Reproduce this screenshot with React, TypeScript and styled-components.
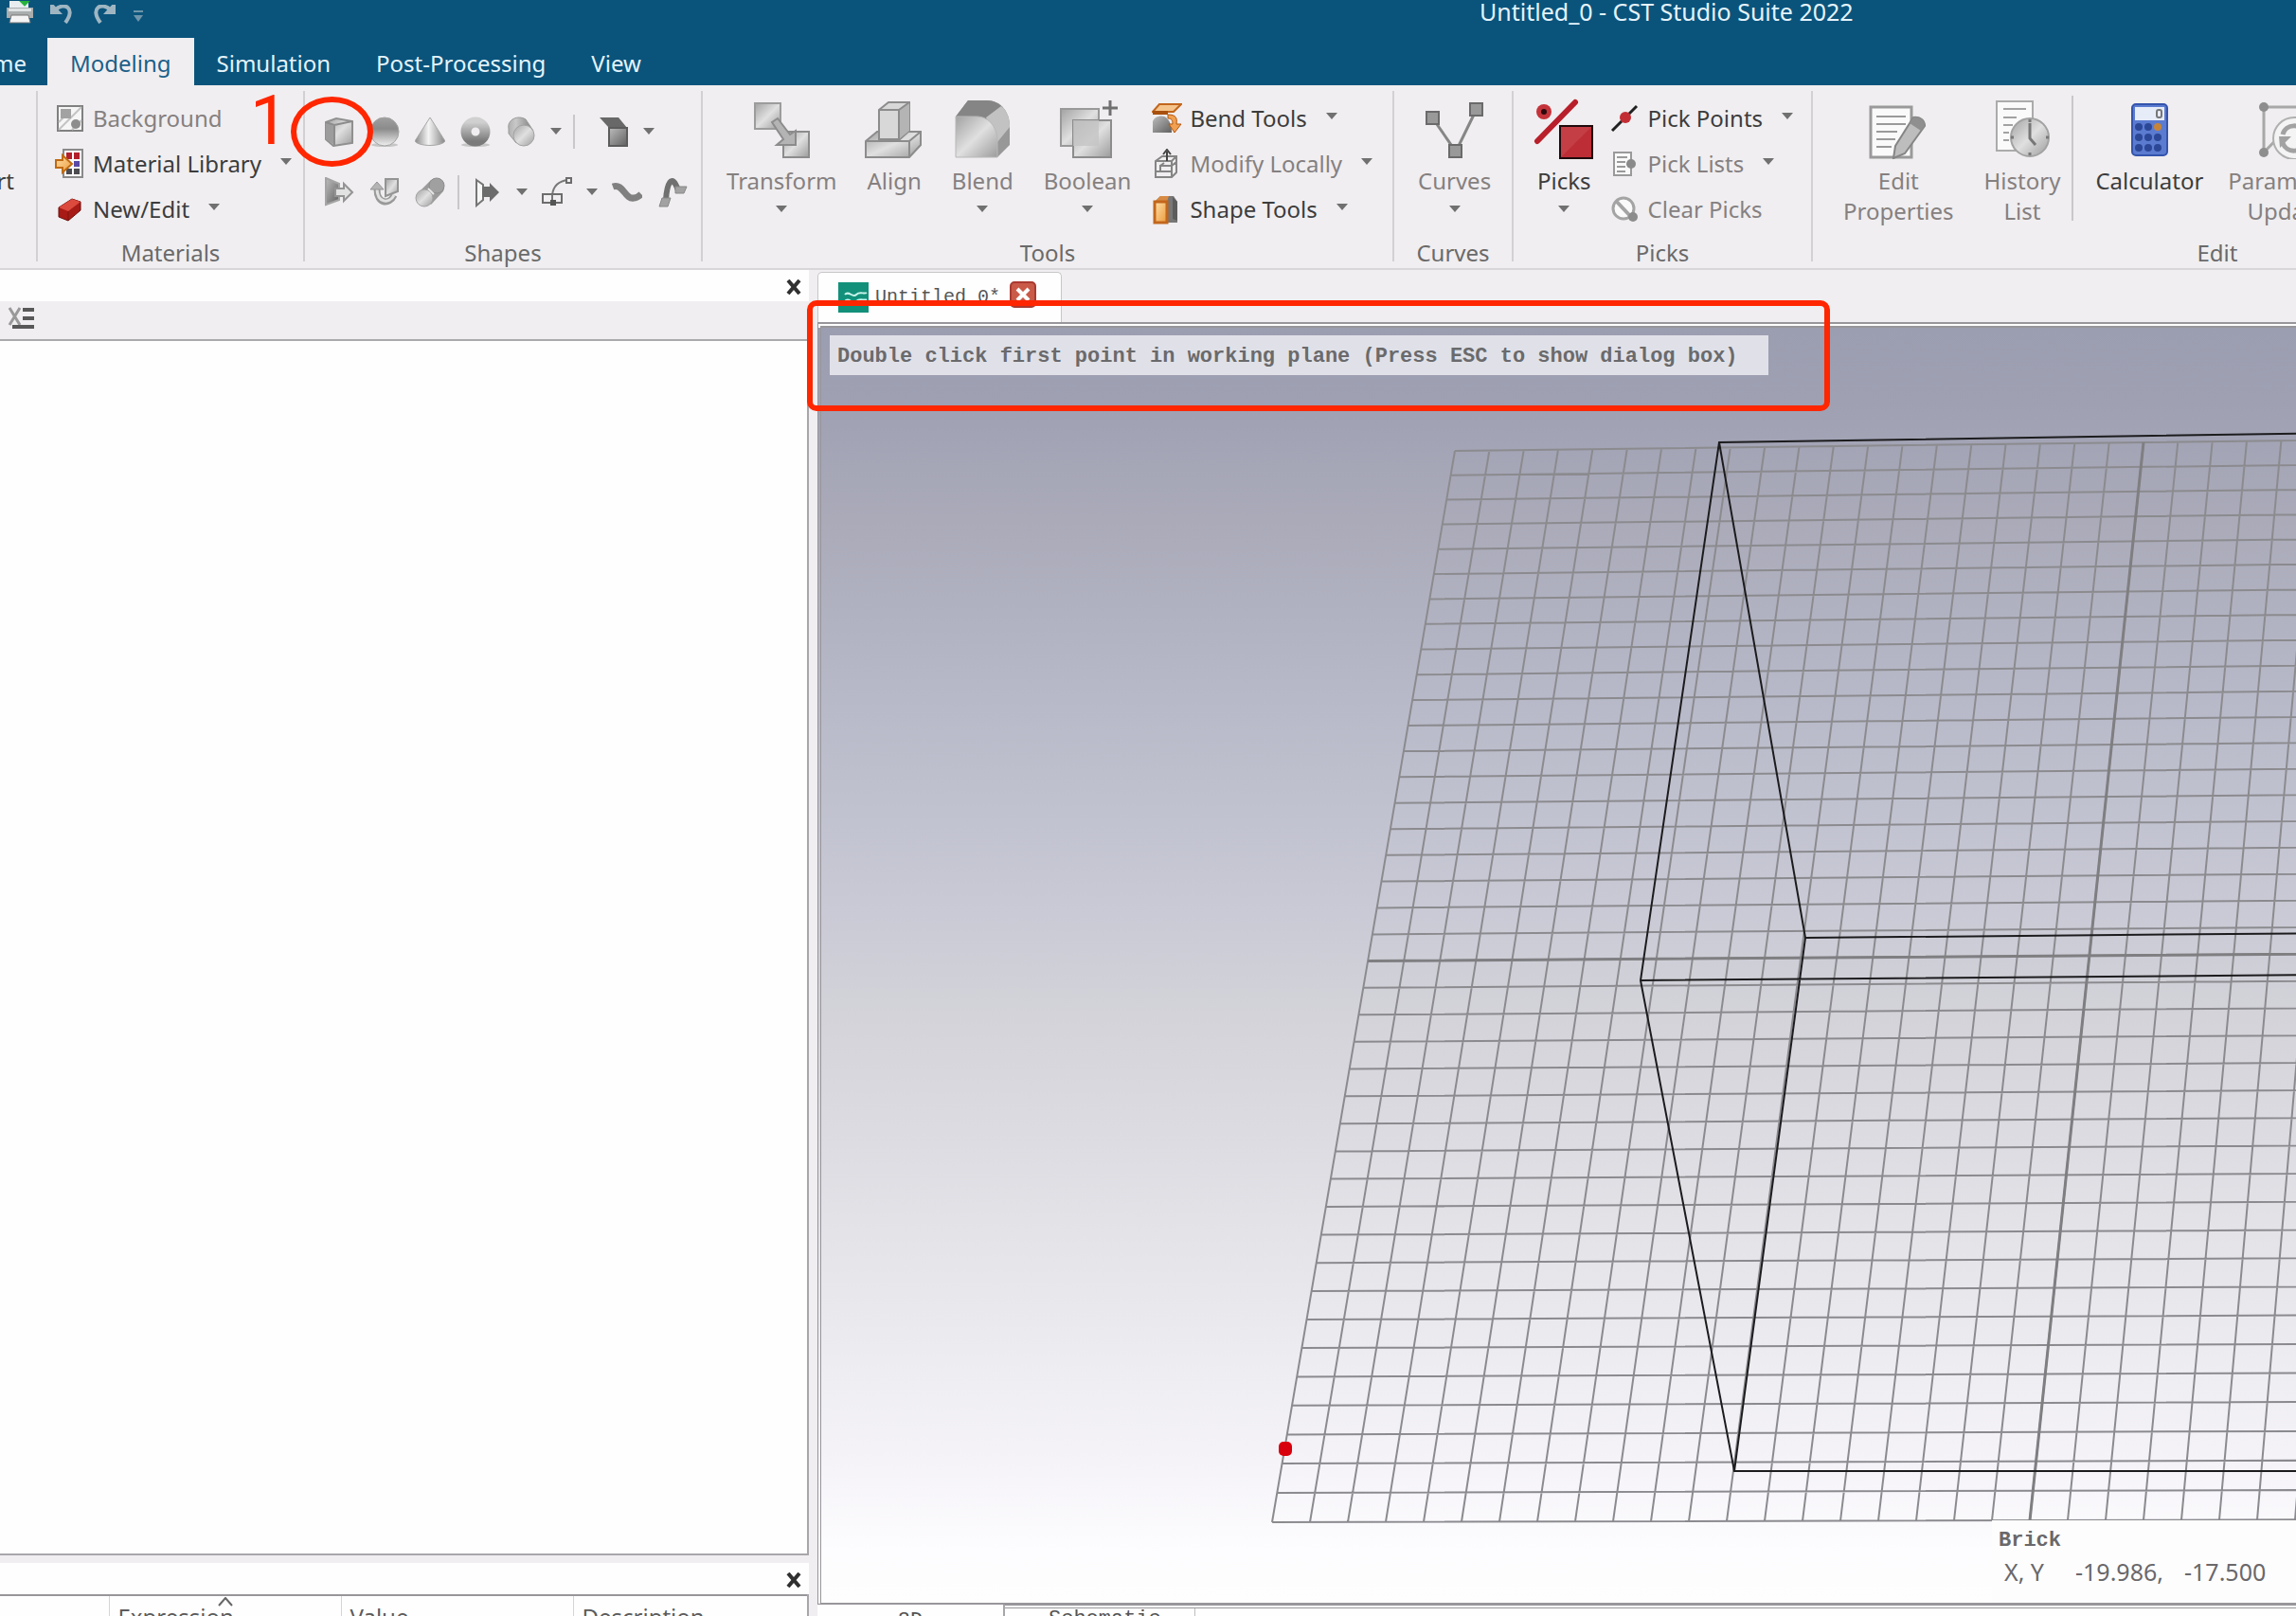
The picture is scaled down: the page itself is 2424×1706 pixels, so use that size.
import React from "react";
import styled, { createGlobalStyle } from "styled-components";

const UI = `"Noto Sans", "Open Sans", sans-serif`;
const MONO = `"Liberation Mono", "DejaVu Sans Mono", monospace`;
const RED = "#ff2600";

const Global = createGlobalStyle`
  * { box-sizing: border-box; }
  body { margin: 0; overflow: hidden; background: #f0eef0; }
  button { font: inherit; color: inherit; background: none; border: 0; padding: 0; margin: 0; cursor: pointer; }
`;

const Shell = styled.div`
  position: relative;
  display: flex;
  flex-direction: column;
  height: 100vh;
  overflow: hidden;
  font: 24px/32px ${UI};
  color: #3c3c3c;
`;

/* ---------- title bar and ribbon tabs ---------- */

const TopBar = styled.header`
  background: #0a547c;
  color: #e4f3fb;
  flex: none;
`;
const TitleRow = styled.div`
  display: grid;
  grid-template-columns: 64.44% 1fr;
  height: 40px;
`;
const QuickAccess = styled.div`
  display: flex;
  gap: 16px;
  padding-left: 6px;
  height: 24px;
`;
const Title = styled.h1`
  margin: 0;
  font: 25px/24px ${UI};
  white-space: nowrap;
`;
const Tabs = styled.nav`
  display: flex;
  height: 50px;
`;
const EdgeTab = styled.button`
  width: 50px;
  padding: 4px 22px 0 0;
  display: flex;
  justify-content: flex-end;
  align-items: center;
  overflow: hidden;
`;
const Tab = styled.button<{ $active?: boolean }>`
  padding: 4px 24px 0;
  background: ${(p) => (p.$active ? "#f0eef0" : "transparent")};
  color: ${(p) => (p.$active ? "#1c5f88" : "inherit")};
`;

/* ---------- ribbon ---------- */

const Ribbon = styled.div`
  display: flex;
  flex: none;
  height: 195px;
  padding-top: 6px;
  border-bottom: 2px solid #d8d6d8;
  overflow: hidden;
`;
const Group = styled.section<{ $w: number; $pad?: number }>`
  flex: none;
  display: flex;
  flex-direction: column;
  justify-content: space-between;
  width: ${(p) => p.$w}px;
  height: 180px;
  padding: 5px 0 0 ${(p) => p.$pad ?? 0}px;
  border-right: 2px solid #d2d0d2;
`;
const GroupBody = styled.div<{ $gap?: number }>`
  display: flex;
  gap: ${(p) => p.$gap ?? 0}px;
  height: 144px;
`;
const GroupLabel = styled.h2<{ $pad?: number }>`
  margin: 0 0 -7px ${(p) => -(p.$pad ?? 0)}px;
  font: inherit;
  color: #6a6a6a;
  text-align: center;
`;
const Big = styled.button<{ $off?: boolean }>`
  display: flex;
  flex-direction: column;
  align-items: center;
  flex: none;
  padding-top: 3px;
  color: ${(p) => (p.$off ? "#858080" : "#3c3c3c")};
  white-space: pre-line;
  text-align: center;
  svg { flex: none; margin: 0 -4px; }
`;
const BigLabel = styled.span`
  margin-top: 7px;
`;
const CaretSlot = styled.span`
  height: 28px;
  display: flex;
  align-items: center;
`;
const Stack = styled.div<{ $ml?: number; $mt?: number }>`
  display: flex;
  flex-direction: column;
  margin: ${(p) => p.$mt ?? 0}px 0 0 ${(p) => p.$ml ?? 0}px;
`;
const Small = styled.button<{ $off?: boolean }>`
  display: flex;
  align-items: center;
  gap: 8px;
  height: 48px;
  white-space: nowrap;
  color: ${(p) => (p.$off ? "#858080" : "#3c3c3c")};
  svg { flex: none; }
`;
const SmallCaret = styled.span`
  display: flex;
  margin: 0 0 4px 12px;
`;
const IconRow = styled.div`
  display: flex;
  align-items: center;
  height: 64px;
`;
const IconButton = styled.button<{ $ml?: number }>`
  width: 48px;
  height: 48px;
  margin-left: ${(p) => p.$ml ?? 0}px;
  display: grid;
  place-items: center;
`;
const CaretButton = styled.button`
  width: 26px;
  height: 48px;
  display: grid;
  place-items: center;
`;
const Rule = styled.span<{ $h: number; $m: number }>`
  flex: none;
  width: 2px;
  height: ${(p) => p.$h}px;
  margin: 0 ${(p) => p.$m}px;
  background: #c9c7c9;
`;
const EdgeLabel = styled.button`
  width: 37px;
  padding: 74px 22px 0 0;
  display: flex;
  justify-content: flex-end;
  align-items: flex-start;
  overflow: hidden;
`;

/* ---------- work area ---------- */

const Work = styled.main`
  flex: 1;
  min-height: 0;
  display: grid;
  grid-template-columns: 854px minmax(0, 1fr);
  gap: 9px;
`;
const Side = styled.aside`
  display: flex;
  flex-direction: column;
  min-height: 0;
`;
const PaneTitle = styled.div`
  flex: none;
  display: flex;
  justify-content: flex-end;
  align-items: center;
  height: 33px;
  padding-right: 8px;
  background: #fefefe;
`;
const TreeTools = styled.div`
  flex: none;
  height: 42px;
  padding: 5px 0 0 7px;
  border-bottom: 2px solid #aaaaac;
`;
const Tree = styled.div`
  flex: 1;
  background: #fefefe;
  border-right: 2px solid #a8a6aa;
  border-bottom: 2px solid #a8a6aa;
`;
const Params = styled.section`
  flex: none;
  height: 56px;
  margin-top: 8px;
  overflow: hidden;
`;
const ParamTable = styled.table`
  width: 100%;
  table-layout: fixed;
  border-collapse: collapse;
  background: #fefefe;
  border-top: 2px solid #98969a;
  border-right: 2px solid #a8a6aa;
`;
const Th = styled.th<{ $w?: number }>`
  position: relative;
  width: ${(p) => (p.$w ? p.$w + "px" : "auto")};
  height: 44px;
  padding: 0 9px;
  border-right: 1px solid #d6d4d6;
  font-weight: 400;
  text-align: left;
  color: #5c5c5c;
`;
const SortMark = styled.span`
  position: absolute;
  top: 1px;
  left: 50%;
  margin-left: -8px;
  display: flex;
`;

const Documents = styled.section`
  display: flex;
  flex-direction: column;
  min-height: 0;
  padding-top: 2px;
`;
const DocTab = styled.div`
  flex: none;
  align-self: flex-start;
  display: flex;
  align-items: center;
  height: 53px;
  padding: 2px 26px 2px 21px;
  background: #fefefe;
  border: 1px solid #c8c6c8;
  border-bottom: 0;
  border-radius: 5px 5px 0 0;
`;
const DocName = styled.span`
  margin: 0 10px 0 7px;
  font: 20px/32px ${MONO};
  color: #555;
`;
const View = styled.div`
  position: relative;
  flex: 1;
  min-height: 0;
  border: double #98969a;
  border-width: 6px 0 2px 4px;
  background: linear-gradient(#9b9db0 0%, #9fa1b3 6%, #aaaab9 15%, #b8bac9 30%, #cacad6 46%, #d3d3d9 54%, #dcdce2 64%, #e9e9ed 77%, #f5f3f8 89%, #fdfcfe 96%, #fefefe 100%);
  svg { display: block; }
`;
const Hint = styled.p`
  position: absolute;
  left: 9px;
  top: 8px;
  margin: 0;
  padding: 4px 32px 0 8px;
  background: #e0e1e8;
  color: #6a6a6c;
  font: 700 22px/38px ${MONO};
  white-space: nowrap;
`;
const Readout = styled.div`
  position: absolute;
  right: 0;
  bottom: 0;
  width: 321px;
  height: 87px;
  padding: 6px 0 0 7px;
  background: #fdfdfe;
  color: #6a686a;
`;
const ReadoutName = styled.div`
  font: 700 22px/32px ${MONO};
`;
const Coords = styled.div`
  display: flex;
  padding-left: 6px;
  font-size: 25px;
  white-space: nowrap;
`;
const Coord = styled.span<{ $w: number }>`
  width: ${(p) => p.$w}px;
`;
const SheetTabs = styled.div`
  flex: none;
  display: flex;
  height: 12px;
  overflow: hidden;
  background: #fefefe;
  font: 22px/24px ${MONO};
  color: #555;
`;
const ActiveSheet = styled.button`
  flex: none;
  width: 198px;
  height: 32px;
  padding-top: 4px;
  border-right: 2px solid #a8a6aa;
`;
const OtherSheets = styled.div`
  flex: 1;
  height: 32px;
  display: flex;
  border-top: 4px double #98969a;
`;
const Sheet = styled.button`
  height: 24px;
  width: 201px;
  padding-left: 46px;
  text-align: left;
  border-right: 1px solid #c0bec0;
`;

/* ---------- annotations ---------- */

const MarkNumber = styled.span`
  position: absolute;
  left: 264px;
  top: 92px;
  font: 400 72px/72px Roboto, sans-serif;
  color: ${RED};
`;
const MarkCircle = styled.span`
  position: absolute;
  left: 307px;
  top: 102px;
  width: 87px;
  height: 74px;
  border: 6px solid ${RED};
  border-radius: 50%;
  pointer-events: none;
`;
const MarkBox = styled.span`
  position: absolute;
  left: 852px;
  top: 317px;
  width: 1080px;
  height: 117px;
  border: 6px solid ${RED};
  border-radius: 10px;
  pointer-events: none;
`;
const Defs = styled.svg`
  position: absolute;
`;

/* ---------- icons ---------- */

const Svg = ({ w = 32, h = 32, children }: { w?: number; h?: number; children: React.ReactNode }) => (
  <svg width={w} height={h} viewBox={`0 0 ${w} ${h}`} fill="none" aria-hidden="true">{children}</svg>
);

const Caret = () => (
  <Svg w={12} h={8}><path d="M0 0h12L6 7z" fill="#707070" /></Svg>
);
const Cross = () => (
  <Svg w={16} h={16}><path d="M2 1l12 14M14 1L2 15" stroke="#303030" strokeWidth="4" /></Svg>
);

const Gradients = () => (
  <Defs width="0" height="0" aria-hidden="true">
    <defs>
      <linearGradient id="g" x1="0" y1="0" x2="1" y2="1"><stop offset="0" stopColor="#a2a2a2" /><stop offset=".5" stopColor="#e0e0e0" /><stop offset="1" stopColor="#9c9c9c" /></linearGradient>
      <linearGradient id="gh"><stop offset="0" stopColor="#888" /><stop offset=".45" stopColor="#f4f4f4" /><stop offset="1" stopColor="#858585" /></linearGradient>
      <linearGradient id="gv" x1="0" y1="0" x2="0" y2="1"><stop offset="0" stopColor="#a0a0a0" /><stop offset=".4" stopColor="#8b8b8b" /><stop offset="1" stopColor="#f0f0f0" /></linearGradient>
      <linearGradient id="gd" x1="0" y1="0" x2="1" y2="1"><stop offset="0" stopColor="#bdbdbd" /><stop offset="1" stopColor="#606060" /></linearGradient>
      <linearGradient id="gt" x1="0" y1="0" x2="0" y2="1"><stop offset="0" stopColor="#d0d0d0" /><stop offset="1" stopColor="#7a7a7a" /></linearGradient>
      <linearGradient id="gc"><stop offset="0" stopColor="#b0b0b0" /><stop offset=".3" stopColor="#c8c8c8" /><stop offset="1" stopColor="#7c7c7c" /></linearGradient>
      <linearGradient id="or" x1="0" y1="0" x2="1" y2="1"><stop offset="0" stopColor="#ffe0a8" /><stop offset="1" stopColor="#ec9a3c" /></linearGradient>
    </defs>
  </Defs>
);

const Printer = () => (
  <Svg w={30} h={24}>
    <path d="M4 0h20v8H4z" fill="#e8eef0" />
    <path d="M1 7h28v11H1z" fill="#a9adad" /><path d="M3 8h24v3H3z" fill="#dfe3e3" />
    <path d="M6 15h18l2 8H4z" fill="#f4f4f4" stroke="#777" />
    <path d="M15-2l5 5 8-8" stroke="#27b33c" strokeWidth="4" />
  </Svg>
);
const Undo = () => (
  <Svg w={28} h={20}><path d="M7 5C15-3 29 3 17 19" stroke="#9fb6c2" strokeWidth="4" /><path d="M1-4v14h13z" fill="#9fb6c2" /></Svg>
);
const Redo = () => (
  <Svg w={28} h={20}><path d="M20 5C12-3-2 3 10 19" stroke="#9fb6c2" strokeWidth="4" /><path d="M26-4v14H13z" fill="#9fb6c2" /></Svg>
);
const More = () => (
  <Svg w={12} h={18}><path d="M1 5h10" stroke="#6f95aa" strokeWidth="2" /><path d="M1 9h10l-5 7z" fill="#6f95aa" /></Svg>
);

const BackgroundIcon = () => (
  <Svg>
    <rect x="3" y="3" width="26" height="26" fill="#f6f6f6" stroke="#808080" strokeWidth="2" />
    <path d="M4 28L28 4M4 20l8-8M18 28l10-10" stroke="#c4c4c4" strokeWidth="2" />
    <rect x="6" y="6" width="11" height="10" fill="#a2a2a2" /><circle cx="22" cy="22" r="5" fill="#8d8d8d" />
  </Svg>
);
const LibraryIcon = () => (
  <Svg>
    <path d="M9 1h20v29H9z" fill="#fafafa" stroke="#8a8a8a" strokeWidth="2" />
    <path d="M12 4h6v7h-6zM20 4h6v7h-6z" fill="#b3202c" /><path d="M20 13h6v6h-6z" fill="#5a4aa8" /><path d="M12 21h6v6h-6zM20 21h6v6h-6z" fill="#4c4c50" />
    <path d="M1 12h7V7l10 9-10 9v-5H1z" fill="url(#or)" stroke="#c06a12" strokeWidth="2" />
  </Svg>
);
const BrickIcon = () => (
  <Svg>
    <path d="M4 14L18 5l9 3v9L14 28 4 24z" fill="#a81a16" stroke="#6d0f0c" />
    <path d="M4 14L18 5l9 3-13 10z" fill="#dc4a3e" /><path d="M14 18v10" stroke="#7c120e" />
  </Svg>
);

const BoxIcon = () => (
  <Svg>
    <path d="M2 6l11-4 17 3v23l-20 3-8-7z" fill="url(#g)" stroke="#909090" strokeWidth="2" />
    <path d="M2 6l9 4v20l-9-6z" fill="#9c9c9c" /><path d="M2 6l9 3 19-4M11 9v21" stroke="#8c8c8c" strokeWidth="2" />
  </Svg>
);
const SphereIcon = () => (
  <Svg><ellipse cx="16" cy="30" rx="14" ry="2" fill="#c6c6c6" /><circle cx="16" cy="16" r="15" fill="url(#gv)" stroke="#a4a4a4" /></Svg>
);
const ConeIcon = () => (
  <Svg><path d="M16 1L0 26c4 6 28 6 32 0z" fill="url(#gh)" stroke="#a8a8a8" /></Svg>
);
const TorusIcon = () => (
  <Svg><ellipse cx="16" cy="30" rx="15" ry="2" fill="#c6c6c6" /><circle cx="16" cy="16" r="10" stroke="url(#gt)" strokeWidth="11" /></Svg>
);
const CylinderIcon = () => (
  <Svg>
    <path d="M3 13C1 3 13-2 21 3l8 12-18 13-8-10z" fill="url(#gc)" stroke="#9a9a9a" />
    <circle cx="19" cy="20" r="11" fill="url(#g)" stroke="#a2a2a2" />
  </Svg>
);
const FaceIcon = () => (
  <Svg>
    <path d="M1 1h20l9 11H11z" fill="#686868" /><path d="M11 12h19v19H11z" fill="url(#gd)" stroke="#5c5c5c" strokeWidth="2" />
  </Svg>
);
const ExtrudeIcon = ({ dark }: { dark?: boolean }) => dark ? (
  <Svg>
    <path d="M5 3l7 5v16l-7 6z" fill="#f6f6f6" stroke="#757575" strokeWidth="2" />
    <path d="M11 10h8V6l10 10-10 10v-5h-8z" fill="#6c6c6c" />
  </Svg>
) : (
  <Svg>
    <path d="M2 1l14 6v17L2 29z" fill="url(#gd)" stroke="#a4a4a4" strokeWidth="2" />
    <path d="M12 12h9V7l9 9-9 9v-5h-9z" fill="#e2e2e2" stroke="#949494" strokeWidth="2" />
  </Svg>
);
const RotateIcon = () => (
  <Svg>
    <path d="M17 2h13v13l-13 5z" fill="url(#g)" stroke="#949494" strokeWidth="2" />
    <path d="M8 13c0 15 13 17 18 6" stroke="#999" strokeWidth="7" /><path d="M8 12c0 15 13 17 18 7" stroke="#e2e2e2" strokeWidth="3" />
    <path d="M1 13l7-8 7 8z" fill="#b4b4b4" stroke="#959595" />
  </Svg>
);
const LoftIcon = () => (
  <Svg>
    <path d="M4 16L16 4c8-6 18 3 14 11L17 29z" fill="#9b9b9b" />
    <circle cx="23" cy="9" r="8" fill="#a0a0a0" stroke="#8c8c8c" /><circle cx="10" cy="22" r="9" fill="url(#g)" stroke="#a2a2a2" />
    <path d="M14 12l6 6" stroke="#e6e6e6" strokeWidth="2" />
  </Svg>
);
const SweepIcon = () => (
  <Svg>
    <path d="M11 19C12 9 18 4 28 3" stroke="#777" strokeWidth="2" />
    <path d="M1 18h20v9H1zM26 1h5v5h-5z" fill="#f0eef0" stroke="#6c6c6c" strokeWidth="2" /><path d="M11 18v8" stroke="#777" strokeWidth="2" /><rect x="9" y="24" width="6" height="6" fill="#555" />
  </Svg>
);
const WaveIcon = () => (
  <Svg><path d="M1 10C12 6 14 24 23 22c4 0 6-2 8-4" stroke="#808080" strokeWidth="7" /></Svg>
);
const PipeIcon = () => (
  <Svg>
    <path d="M9 24C10 8 15-6 22 14" stroke="#707070" strokeWidth="6" />
    <path d="M5 22h9l-3 9H2zM19 10h12l-3 7h-9z" fill="#a2a2a2" stroke="#888" />
  </Svg>
);

const TransformIcon = () => (
  <Svg w={64} h={64}>
    <rect x="4" y="5" width="27" height="27" fill="url(#g)" stroke="#9c9c9c" strokeWidth="2" /><rect x="34" y="35" width="27" height="27" fill="url(#g)" stroke="#8c8c8c" strokeWidth="2" />
    <path d="M22 25l6-4 13 17 6-4v15H27l7-6z" fill="#b4b4b4" stroke="#8c8c8c" strokeWidth="2" />
  </Svg>
);
const AlignIcon = () => (
  <Svg w={64} h={64}>
    <path d="M2 45l12-10h46v14L48 62H2z" fill="url(#g)" stroke="#8c8c8c" strokeWidth="2" /><path d="M2 45h46l12-10M48 45v17" stroke="#8c8c8c" strokeWidth="2" />
    <path d="M16 12l10-8h22v30l-10 9H16z" fill="#d8d8d8" stroke="#8c8c8c" strokeWidth="2" /><path d="M37 12l11-8v30l-11 9z" fill="#b4b4b4" /><path d="M16 12h21l11-8M37 12v31" stroke="#8c8c8c" strokeWidth="2" />
  </Svg>
);
const BlendIcon = () => (
  <Svg w={64} h={64}>
    <path d="M4 19L17 2h20c16 0 24 14 24 27v20L48 62H4z" fill="#989898" />
    <path d="M4 19L17 2h20c7 0 13 3 17 8L36 23z" fill="#858585" /><path d="M36 20l16-12c7 6 9 14 9 22L48 46z" fill="#c2c2c2" />
    <path d="M4 19h22c15 0 22 14 22 26v17H4z" fill="url(#g)" stroke="#b8b8b8" />
  </Svg>
);
const BooleanIcon = () => (
  <Svg w={64} h={64}>
    <rect x="4" y="11" width="40" height="39" fill="url(#g)" stroke="#999" strokeWidth="2" /><rect x="17" y="23" width="40" height="39" fill="url(#g)" stroke="#8c8c8c" strokeWidth="2" />
    <path d="M17 23h27v27H17z" fill="#c4c4c4" opacity=".8" /><path d="M56 2v16M48 10h16" stroke="#707070" strokeWidth="3" />
  </Svg>
);
const BendIcon = () => (
  <Svg>
    <path d="M1 9L8 1h23l-8 8z" fill="#f4c48c" stroke="#c2661c" strokeWidth="2" /><path d="M1 10h16" stroke="#a8500e" strokeWidth="4" />
    <path d="M1 31V19c2-6 12-8 16-2 3 4 4 8 4 14z" fill="url(#gd)" />
    <path d="M17 12c9 0 10 4 9 10h5l-7 9-6-9h4c0-4-1-6-5-6z" fill="#f0a050" stroke="#b4560e" />
  </Svg>
);
const ModifyIcon = () => (
  <Svg>
    <path d="M4 13l7-5h15v17l-5 5H4zM4 13h17l5-5M21 13v17M4 24h17M9 24v-6h12l5-4M9 18l4-3" stroke="#858585" strokeWidth="2" />
    <path d="M16 13V3M12 6l4-5 4 5" stroke="#444" strokeWidth="2" />
  </Svg>
);
const ShapeToolIcon = () => (
  <Svg>
    <path d="M3 8l6-6h14l4 6v22H3z" fill="#777" /><path d="M3 8l6-6h9l-2 6z" fill="#d88a44" />
    <path d="M3 8h13v22H3z" fill="url(#or)" stroke="#c2661c" strokeWidth="3" /><path d="M22 3l5 5v20l-5-2z" fill="#5c5c5c" />
  </Svg>
);
const CurvesIcon = () => (
  <Svg w={64} h={64}>
    <path d="M8 20l25 36L54 13" stroke="#868686" strokeWidth="3" />
    <path d="M2 14h13v13H2zM48 5h13v13H48zM26 49h13v13H26z" fill="#999" stroke="#6a6a6a" strokeWidth="2" />
  </Svg>
);
const PicksIcon = () => (
  <Svg w={64} h={64}>
    <path d="M4 45L44 4" stroke="#b81f2a" strokeWidth="6" strokeLinecap="round" />
    <circle cx="11" cy="14" r="8" fill="#c4333a" /><circle cx="11" cy="14" r="3" fill="#2b0a0c" />
    <rect x="28" y="29" width="34" height="34" fill="#bc2d35" stroke="#200a0c" strokeWidth="2" /><path d="M29 30h32L29 62z" fill="#cc5056" opacity=".5" />
  </Svg>
);
const PickPointIcon = () => (
  <Svg><path d="M2 29L28 3" stroke="#202020" strokeWidth="3" /><circle cx="16" cy="15" r="6" fill="#c22e34" /></Svg>
);
const PickListIcon = () => (
  <Svg>
    <path d="M4 4h18v24H4z" fill="#fafafa" stroke="#9a9a9a" strokeWidth="2" /><path d="M7 9h11M7 14h9M7 19h9M7 24h9" stroke="#9a9a9a" strokeWidth="2" /><circle cx="22" cy="16" r="5" fill="#8a8a8a" />
  </Svg>
);
const ClearIcon = () => (
  <Svg>
    <circle cx="14" cy="15" r="11" fill="#fafafa" stroke="#a4a4a4" strokeWidth="3" /><path d="M6 7l16 17" stroke="#a4a4a4" strokeWidth="4" /><circle cx="24" cy="24" r="5" fill="#8c8c8c" />
  </Svg>
);
const EditPropsIcon = () => (
  <Svg w={64} h={64}>
    <path d="M3 9h43v53H3z" fill="#fafafa" stroke="#9a9a9a" strokeWidth="3" /><path d="M9 19h31M9 27h31M9 35h22M9 43h20M9 51h16" stroke="#9a9a9a" strokeWidth="2" />
    <path d="M29 50L48 20c7-1 12 3 12 9L39 58l-12 5z" fill="#bdbdbd" stroke="#858585" strokeWidth="2" /><path d="M48 20c7-1 12 3 12 9l-4 5-12-8z" fill="#8f8f8f" />
  </Svg>
);
const HistoryIcon = () => (
  <Svg w={64} h={64}>
    <path d="M5 3h38v52H5z" fill="#fafafa" stroke="#ababab" strokeWidth="2" /><path d="M12 11h24M12 20h14M12 28h10M12 36h6M12 44h6" stroke="#a2a2a2" strokeWidth="2" />
    <circle cx="40" cy="41" r="20" fill="url(#g)" stroke="#a2a2a2" strokeWidth="2" /><path d="M40 26v16l6 7M40 22v3M40 57v3M20 41h3M57 41h3" stroke="#777" strokeWidth="3" />
  </Svg>
);
const CalculatorIcon = () => (
  <Svg w={64} h={64}>
    <rect x="14" y="6" width="37" height="54" rx="4" fill="#5b7bd0" stroke="#3454ac" strokeWidth="2" /><rect x="17" y="9" width="31" height="14" fill="#e6ecf8" />
    <rect x="40" y="12" width="5" height="8" rx="2" stroke="#777" strokeWidth="2" />
    {[30, 41, 52].map((y) => [21, 31, 41].map((x) => (
      <circle key={`${x}-${y}`} cx={x} cy={y} r="4" fill={x === 41 && y === 30 ? "#c68438" : "#2b4796"} />
    )))}
  </Svg>
);
const ParametricIcon = () => (
  <Svg w={64} h={64}>
    <path d="M8 9h54M8 9v48M8 57L34 30" stroke="#a8a8a8" strokeWidth="3" /><circle cx="8" cy="9" r="5" fill="#8e8e8e" /><circle cx="8" cy="57" r="5" fill="#8e8e8e" />
    <circle cx="40" cy="42" r="22" fill="#f4f4f4" stroke="#b0b0b0" strokeWidth="2" />
    <path d="M28 38c3-12 20-12 24-1M52 46c-4 12-20 12-24 1" stroke="#a2a2a2" strokeWidth="5" /><path d="M24 40h13L25 52zM56 44H43l12-12z" fill="#a2a2a2" />
  </Svg>
);
const TreeFilterIcon = () => (
  <Svg w={30} h={26}>
    <path d="M3 2l11 18M14 2L3 20" stroke="#999" strokeWidth="3" /><path d="M17 4h12M17 13h12M6 22h23" stroke="#585858" strokeWidth="4" />
  </Svg>
);
const DocIcon = () => (
  <Svg w={32} h={32}>
    <path d="M0 0h32v32H0z" fill="#12907a" />
    <path d="M7 13c4-5 8 4 12 0s8 0 11-2M7 20c4-5 8 4 12 0s8 0 11-2" stroke="#c9f3ea" strokeWidth="2" />
  </Svg>
);
const DocCloseIcon = () => (
  <Svg w={28} h={28}>
    <rect x="1" y="1" width="26" height="26" rx="4" fill="#c95a48" stroke="#a93a30" strokeWidth="2" /><path d="M8 8l12 12M20 8L8 20" stroke="#fff" strokeWidth="4" />
  </Svg>
);

/* ---------- 3D scene ---------- */

type Pt = [number, number];
const HALF = 20;
const FAR = 1.1;
const [TL, TA, BL, BA]: Pt[] = [[669, 130], [1396, 121], [476, 1261], [1276, 1259]];

/* Point of the working plane: column counted from the left edge, row from the far edge. */
const plane = (col: number, row: number): Pt => {
  const u = col / HALF;
  const t = row / (2 * HALF);
  const wf = FAR * (1 - t);
  const w = wf + t;
  const mix = (k: 0 | 1) => {
    const far = TL[k] + (TA[k] - TL[k]) * u;
    const near = BL[k] + (BA[k] - BL[k]) * u;
    return (far * wf + near * t) / w;
  };
  return [mix(0), mix(1)];
};
const seg = (a: Pt, b: Pt) => `M${a[0].toFixed(1)} ${a[1].toFixed(1)}L${b[0].toFixed(1)} ${b[1].toFixed(1)}`;

const Scene = () => {
  const range = Array.from({ length: 2 * HALF + 1 }, (_, i) => i);
  const rows = range.map((r) => seg(plane(0, r), plane(2 * HALF, r))).join("");
  const cols = range.map((c) => seg(plane(c, 0), plane(c, 2 * HALF))).join("");
  const axes = seg(plane(0, HALF), plane(2 * HALF, HALF)) + seg(plane(HALF, 0), plane(HALF, 2 * HALF));
  return (
    <svg width="100%" height="100%" fill="none" role="img" aria-label="Working plane">
      <path d={rows + cols} stroke="#8b8b8f" strokeWidth="2" />
      <path d={axes} stroke="#7f7f82" strokeWidth="3" />
      <path d="M1600 111L948 121L865 689L964 1207H1600M948 121L1039 644L964 1207M1039 644L1600 639M865 689L1600 683" stroke="#1c1c1e" strokeWidth="2" />
      <rect x="483" y="1176" width="14" height="15" rx="5" fill="#d8000c" />
    </svg>
  );
};

/* ---------- composed parts ---------- */

const BigTool = ({ icon, label, off, caret }: { icon: React.ReactNode; label: string; off?: boolean; caret?: boolean }) => (
  <Big $off={off}>{icon}<BigLabel>{label}</BigLabel>{caret && <CaretSlot><Caret /></CaretSlot>}</Big>
);
const SmallTool = ({ icon, label, off, caret }: { icon: React.ReactNode; label: string; off?: boolean; caret?: boolean }) => (
  <Small $off={off}>{icon}<span>{label}</span>{caret && <SmallCaret><Caret /></SmallCaret>}</Small>
);
const Tool = ({ label, ml, children }: { label: string; ml?: number; children: React.ReactNode }) => (
  <IconButton aria-label={label} $ml={ml}>{children}</IconButton>
);
const Drop = ({ label }: { label: string }) => <CaretButton aria-label={label}><Caret /></CaretButton>;

export default function App() {
  return (
    <Shell>
      <Global />
      <Gradients />
      <TopBar>
        <TitleRow>
          <QuickAccess>
            <button aria-label="Print"><Printer /></button>
            <button aria-label="Undo"><Undo /></button>
            <button aria-label="Redo"><Redo /></button>
            <button aria-label="Customize"><More /></button>
          </QuickAccess>
          <Title>Untitled_0 - CST Studio Suite 2022</Title>
        </TitleRow>
        <Tabs>
          <EdgeTab>Home</EdgeTab>
          <Tab $active>Modeling</Tab>
          <Tab>Simulation</Tab>
          <Tab>Post-Processing</Tab>
          <Tab>View</Tab>
        </Tabs>
      </TopBar>

      <Ribbon>
        <Group $w={40}>
          <GroupBody><EdgeLabel>Import</EdgeLabel></GroupBody>
        </Group>
        <Group $w={282} $pad={18}>
          <GroupBody>
            <Stack>
              <SmallTool icon={<BackgroundIcon />} label="Background" off />
              <SmallTool icon={<LibraryIcon />} label="Material Library" caret />
              <SmallTool icon={<BrickIcon />} label="New/Edit" caret />
            </Stack>
          </GroupBody>
          <GroupLabel $pad={18}>Materials</GroupLabel>
        </Group>
        <Group $w={420} $pad={12}>
          <GroupBody>
            <Stack $mt={6}>
              <IconRow>
                <Tool label="Brick"><BoxIcon /></Tool>
                <Tool label="Sphere"><SphereIcon /></Tool>
                <Tool label="Cone"><ConeIcon /></Tool>
                <Tool label="Torus"><TorusIcon /></Tool>
                <Tool label="Cylinder"><CylinderIcon /></Tool>
                <Drop label="More shapes" />
                <Rule $h={36} $m={5} />
                <Tool label="Faces" ml={12}><FaceIcon /></Tool>
                <Drop label="More faces" />
              </IconRow>
              <IconRow>
                <Tool label="Extrude"><ExtrudeIcon /></Tool>
                <Tool label="Rotate"><RotateIcon /></Tool>
                <Tool label="Loft"><LoftIcon /></Tool>
                <Rule $h={36} $m={5} />
                <Tool label="Extrude curve"><ExtrudeIcon dark /></Tool>
                <Drop label="More extrusions" />
                <Tool label="Sweep curve"><SweepIcon /></Tool>
                <Drop label="More sweeps" />
                <Tool label="Wire"><WaveIcon /></Tool>
                <Tool label="Bond wire"><PipeIcon /></Tool>
              </IconRow>
            </Stack>
          </GroupBody>
          <GroupLabel $pad={12}>Shapes</GroupLabel>
        </Group>
        <Group $w={730} $pad={25}>
          <GroupBody $gap={32}>
            <BigTool icon={<TransformIcon />} label="Transform" off caret />
            <BigTool icon={<AlignIcon />} label="Align" off />
            <BigTool icon={<BlendIcon />} label="Blend" off caret />
            <BigTool icon={<BooleanIcon />} label="Boolean" off caret />
            <Stack $ml={-10}>
              <SmallTool icon={<BendIcon />} label="Bend Tools" caret />
              <SmallTool icon={<ModifyIcon />} label="Modify Locally" off caret />
              <SmallTool icon={<ShapeToolIcon />} label="Shape Tools" caret />
            </Stack>
          </GroupBody>
          <GroupLabel $pad={25}>Tools</GroupLabel>
        </Group>
        <Group $w={126} $pad={25}>
          <GroupBody><BigTool icon={<CurvesIcon />} label="Curves" off caret /></GroupBody>
          <GroupLabel $pad={25}>Curves</GroupLabel>
        </Group>
        <Group $w={316} $pad={25}>
          <GroupBody $gap={20}>
            <BigTool icon={<PicksIcon />} label="Picks" caret />
            <Stack>
              <SmallTool icon={<PickPointIcon />} label="Pick Points" caret />
              <SmallTool icon={<PickListIcon />} label="Pick Lists" off caret />
              <SmallTool icon={<ClearIcon />} label="Clear Picks" off />
            </Stack>
          </GroupBody>
          <GroupLabel $pad={25}>Picks</GroupLabel>
        </Group>
        <Group $w={856} $pad={32}>
          <GroupBody>
            <BigTool icon={<EditPropsIcon />} label={"Edit\nProperties"} off />
            <Stack $ml={32}><BigTool icon={<HistoryIcon />} label={"History\nList"} off /></Stack>
            <Rule $h={132} $m={12} />
            <Stack $ml={11}><BigTool icon={<CalculatorIcon />} label="Calculator" /></Stack>
            <Stack $ml={26}><BigTool icon={<ParametricIcon />} label={"Parametric\nUpdate"} off /></Stack>
          </GroupBody>
          <GroupLabel $pad={32}>Edit</GroupLabel>
        </Group>
      </Ribbon>

      <Work>
        <Side>
          <PaneTitle><button aria-label="Close navigation tree"><Cross /></button></PaneTitle>
          <TreeTools><button aria-label="Filter tree"><TreeFilterIcon /></button></TreeTools>
          <Tree />
          <Params>
            <PaneTitle><button aria-label="Close parameter list"><Cross /></button></PaneTitle>
            <ParamTable>
              <thead>
                <tr>
                  <Th $w={115} aria-label="Name" />
                  <Th $w={245}>
                    Expression
                    <SortMark><Svg w={16} h={10}><path d="M1 9l7-8 7 8" stroke="#666" strokeWidth="2" /></Svg></SortMark>
                  </Th>
                  <Th $w={245}>Value</Th>
                  <Th>Description</Th>
                </tr>
              </thead>
            </ParamTable>
          </Params>
        </Side>

        <Documents>
          <DocTab>
            <DocIcon />
            <DocName>Untitled_0*</DocName>
            <button aria-label="Close document"><DocCloseIcon /></button>
          </DocTab>
          <View>
            <Scene />
            <Hint>Double click first point in working plane (Press ESC to show dialog box)</Hint>
            <Readout>
              <ReadoutName>Brick</ReadoutName>
              <Coords>
                <Coord $w={75}>X, Y</Coord>
                <Coord $w={115}>-19.986,</Coord>
                <span>-17.500</span>
              </Coords>
            </Readout>
          </View>
          <SheetTabs>
            <ActiveSheet>3D</ActiveSheet>
            <OtherSheets><Sheet>Schematic</Sheet></OtherSheets>
          </SheetTabs>
        </Documents>
      </Work>

      <MarkNumber>1</MarkNumber>
      <MarkCircle />
      <MarkBox />
    </Shell>
  );
}
